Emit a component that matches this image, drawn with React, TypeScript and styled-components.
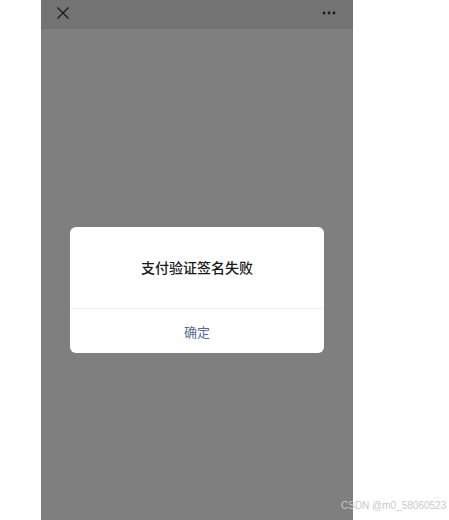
import styled, { createGlobalStyle } from "styled-components";

const GlobalStyle = createGlobalStyle`
  html, body {
    margin: 0;
    padding: 0;
    background: #ffffff;
  }
  body {
    font-family: "Noto Sans CJK SC", "Noto Sans", sans-serif;
  }
`;

const Page = styled.div`
  position: relative;
  width: 449px;
  height: 520px;
  overflow: hidden;
  padding-left: 41px;
  box-sizing: border-box;
`;

const Phone = styled.div`
  width: 312px;
  height: 520px;
  display: flex;
  flex-direction: column;
  background: #7f7f7f;
`;

const NavBar = styled.div`
  height: 29px;
  flex-shrink: 0;
  display: flex;
  align-items: center;
  justify-content: space-between;
  padding: 0 15px 0 14px;
  background: #737373;
  box-sizing: border-box;
`;

const IconButton = styled.div`
  display: flex;
  align-items: center;
  justify-content: center;
  width: 16px;
  height: 16px;
  margin-top: -4px;
`;

const Body = styled.div`
  flex: 1;
  display: flex;
  justify-content: center;
  padding-top: 198px;
`;

const Dialog = styled.div`
  width: 254px;
  height: 126px;
  background: #ffffff;
  border-radius: 6px;
  display: flex;
  flex-direction: column;
  overflow: hidden;
`;

const Message = styled.div`
  height: 82px;
  display: flex;
  align-items: center;
  justify-content: center;
  padding-bottom: 2px;
  box-sizing: border-box;
  font-size: 14px;
  font-weight: 500;
  color: #1a1a1a;
  border-bottom: 1px solid #f1f1f1;
`;

const Action = styled.div`
  flex: 1;
  display: flex;
  align-items: center;
  justify-content: center;
  font-size: 13px;
  color: #576b95;
`;

const Watermark = styled.div`
  position: absolute;
  left: 341px;
  top: 500px;
  font-family: "Liberation Sans", Arial, sans-serif;
  font-size: 10px;
  color: #c9c9c9;
  white-space: nowrap;
`;

function CloseIcon() {
  return (
    <svg width="14" height="14" viewBox="0 0 14 14">
      <path d="M1.5 1.5 L12.5 12.5 M12.5 1.5 L1.5 12.5" stroke="#1c1c1c" strokeWidth="1.3" fill="none" />
    </svg>
  );
}

function MoreIcon() {
  return (
    <svg width="16" height="4" viewBox="0 0 16 4">
      <circle cx="2" cy="2" r="1.4" fill="#1c1c1c" />
      <circle cx="7" cy="2" r="1.4" fill="#1c1c1c" />
      <circle cx="12" cy="2" r="1.4" fill="#1c1c1c" />
    </svg>
  );
}

export default function App() {
  return (
    <>
      <GlobalStyle />
      <Page>
        <Phone>
          <NavBar>
            <IconButton>
              <CloseIcon />
            </IconButton>
            <IconButton>
              <MoreIcon />
            </IconButton>
          </NavBar>
          <Body>
            <Dialog>
              <Message>支付验证签名失败</Message>
              <Action>确定</Action>
            </Dialog>
          </Body>
        </Phone>
        <Watermark>CSDN @m0_58060523</Watermark>
      </Page>
    </>
  );
}
